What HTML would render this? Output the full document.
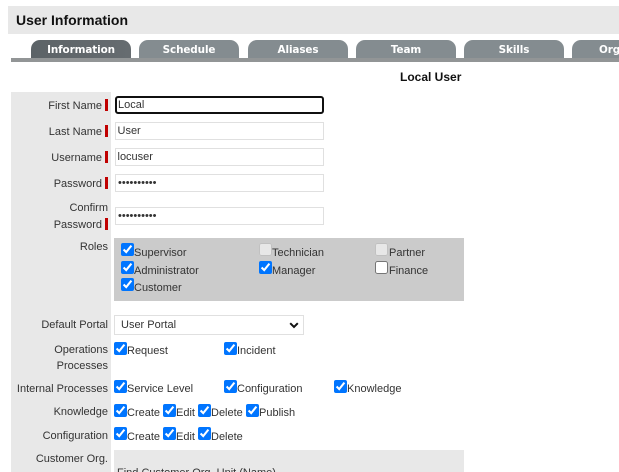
<!DOCTYPE html>
<html><head><meta charset="utf-8"><style>
html,body{margin:0;padding:0;background:#fff;width:619px;height:472px;overflow:hidden}
body{position:relative;font-family:"Liberation Sans",Arial,sans-serif;font-size:11px;color:#333}
.a,.l,.t,.r,input,select,.c{position:absolute}
.l{right:511px;white-space:nowrap;line-height:16px;text-align:right;color:#333}
.r{left:105px;width:3px;height:12px;background:#c00000}
.t{top:40px;height:18px;width:100px;background:#848c90;border-radius:9px 9px 0 0;color:#fff;font:bold 10.4px "DejaVu Sans",sans-serif;letter-spacing:-.1px;text-align:center;line-height:20px}
input[type=text],input[type=password]{box-sizing:border-box;left:115px;width:209px;height:18px;border:1px solid #e0e0e0;padding:0 1px 0 1.5px;margin:0;font:11px "Liberation Sans",Arial,sans-serif;color:#333;background:#fff;outline:none}
input[type=password]{padding-left:2px}
input[type=checkbox]{margin:0;width:13px;height:13px}
.c{white-space:nowrap;line-height:14px}
</style></head><body>
<div class="a" style="left:8px;top:6px;width:611px;height:28px;background:#e8e8e8"></div>
<div class="a" style="left:16px;top:12px;font:bold 14px/16px 'Liberation Sans',Arial,sans-serif;color:#111">User Information</div>

<div class="t" style="left:31px;background:linear-gradient(90deg,#5c6367,#666c70)">Information</div>
<div class="t" style="left:139px">Schedule</div>
<div class="t" style="left:248px">Aliases</div>
<div class="t" style="left:356px">Team</div>
<div class="t" style="left:464px">Skills</div>
<div class="t" style="left:572px;width:47px;border-radius:9px 0 0 0;text-align:left;padding-left:27px;box-sizing:border-box;overflow:hidden">Org</div>
<div class="a" style="left:11px;top:58px;width:608px;height:4px;background:#929596"></div>

<div class="a" style="left:400px;top:69px;font:bold 12px/16px 'Liberation Sans',Arial,sans-serif;color:#111">Local User</div>

<div class="a" style="left:11px;top:92px;width:100px;height:380px;background:#e8e8e8"></div>

<div class="l" style="right:517px;top:98px">First Name</div><div class="r" style="top:99px"></div>
<div class="l" style="right:517px;top:124px">Last Name</div><div class="r" style="top:125px"></div>
<div class="l" style="right:517px;top:150px">Username</div><div class="r" style="top:151px"></div>
<div class="l" style="right:517px;top:176px">Password</div><div class="r" style="top:177px"></div>
<div class="l" style="right:511px;top:200px;">Confirm</div>
<div class="l" style="right:517px;top:217px">Password</div><div class="r" style="top:218px"></div>
<div class="l" style="top:239px">Roles</div>
<div class="l" style="top:317px">Default Portal</div>
<div class="l" style="top:342px">Operations</div>
<div class="l" style="top:358px">Processes</div>
<div class="l" style="top:381px">Internal Processes</div>
<div class="l" style="top:404px">Knowledge</div>
<div class="l" style="top:428px">Configuration</div>
<div class="l" style="top:451px">Customer Org.</div>
<div class="l" style="top:469px">Unit</div>

<input type="text" value="Local" style="top:96px;border:2px solid #101010;border-radius:3px;padding:0 0 0 1px">
<input type="text" value="User" style="top:122px">
<input type="text" value="locuser" style="top:148px">
<input type="password" value="1234567890" style="top:174px">
<input type="password" value="1234567890" style="top:207px">

<div class="a" style="left:114px;top:238px;width:350px;height:63px;background:#cbcbcb"></div>
<input type="checkbox" checked style="left:121px;top:243px"><div class="c" style="left:134px;top:246px">Supervisor</div>
<input type="checkbox" disabled style="left:259px;top:243px"><div class="c" style="left:272px;top:246px">Technician</div>
<input type="checkbox" disabled style="left:375px;top:243px"><div class="c" style="left:389px;top:246px">Partner</div>
<input type="checkbox" checked style="left:121px;top:261px"><div class="c" style="left:134px;top:264px">Administrator</div>
<input type="checkbox" checked style="left:259px;top:261px"><div class="c" style="left:272px;top:264px">Manager</div>
<input type="checkbox" style="left:375px;top:261px"><div class="c" style="left:389px;top:264px">Finance</div>
<input type="checkbox" checked style="left:121px;top:278px"><div class="c" style="left:134px;top:281px">Customer</div>

<select style="left:114px;top:315px;width:190px;height:20px;box-sizing:border-box;appearance:none;-webkit-appearance:none;border:1px solid #e0e0e0;background:#fff;font:11px 'Liberation Sans',Arial,sans-serif;color:#333;padding:0 0 0 6px;margin:0;outline:none;border-radius:0"><option>User Portal</option></select>
<svg class="a" style="left:289px;top:322px" width="10" height="7" viewBox="0 0 10 7"><path d="M1.2 1.2 L5 5 L8.8 1.2" fill="none" stroke="#111" stroke-width="2"/></svg>

<input type="checkbox" checked style="left:114px;top:342px"><div class="c" style="left:127px;top:344px">Request</div>
<input type="checkbox" checked style="left:224px;top:342px"><div class="c" style="left:237px;top:344px">Incident</div>

<input type="checkbox" checked style="left:114px;top:380px"><div class="c" style="left:127px;top:382px">Service Level</div>
<input type="checkbox" checked style="left:224px;top:380px"><div class="c" style="left:237px;top:382px">Configuration</div>
<input type="checkbox" checked style="left:334px;top:380px"><div class="c" style="left:347px;top:382px">Knowledge</div>

<input type="checkbox" checked style="left:114px;top:404px"><div class="c" style="left:127px;top:406px">Create</div>
<input type="checkbox" checked style="left:163px;top:404px"><div class="c" style="left:176px;top:406px">Edit</div>
<input type="checkbox" checked style="left:198px;top:404px"><div class="c" style="left:211px;top:406px">Delete</div>
<input type="checkbox" checked style="left:246px;top:404px"><div class="c" style="left:259px;top:406px">Publish</div>

<input type="checkbox" checked style="left:114px;top:427px"><div class="c" style="left:127px;top:430px">Create</div>
<input type="checkbox" checked style="left:163px;top:427px"><div class="c" style="left:176px;top:430px">Edit</div>
<input type="checkbox" checked style="left:198px;top:427px"><div class="c" style="left:211px;top:430px">Delete</div>

<div class="a" style="left:114px;top:450px;width:350px;height:22px;background:#e8e8e8"></div>
<div class="c" style="left:117px;top:466px">Find Customer Org. Unit (Name)</div>
</body></html>
